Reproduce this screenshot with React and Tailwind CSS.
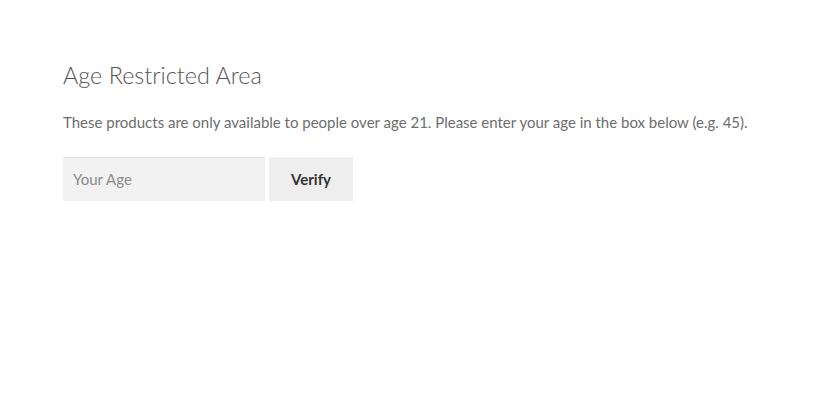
export default function App() {
  return (
    <div className="min-h-screen bg-white px-[63px] pt-[57px] font-['Lato',sans-serif] text-[#6d6d6d]">
      <h1 className="text-[23.4px] font-light leading-[36px] text-[#555]">Age Restricted Area</h1>
      <p className="mt-[16px] text-[15px] leading-[26px]">
        These products are only available to people over age 21. Please enter your age in the box below (e.g. 45).
      </p>
      <form className="mt-[22px] flex gap-1" onSubmit={(e) => e.preventDefault()}>
        <input
          type="text"
          placeholder="Your Age"
          className="h-[44px] w-[202px] bg-[#f2f2f2] px-[10px] text-[15px] text-[#43454b] placeholder:text-[#8a8a8a] shadow-[inset_0_1px_1px_rgba(0,0,0,0.08)] outline-none"
        />
        <button type="submit" className="h-[44px] w-[84px] bg-[#eeeeee] text-[15px] font-bold text-[#333]">
          Verify
        </button>
      </form>
    </div>
  );
}
